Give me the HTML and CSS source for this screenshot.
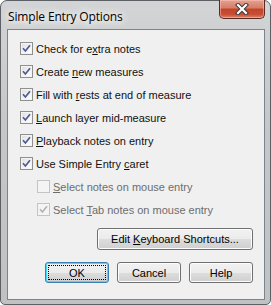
FILE: index.html
```html
<!DOCTYPE html>
<html>
<head>
<meta charset="utf-8">
<link rel="stylesheet" href="styles.css">
</head>
<body>
<div class="window">
  <div class="titlebar">
    <span class="title">Simple Entry Options</span>
    <div class="close">
      <svg width="14" height="12" viewBox="0 0 14 12">
        <path d="M3 2 L11 10 M11 2 L3 10" stroke="#3a3a3a" stroke-width="4.2" stroke-linecap="square" fill="none"/>
        <path d="M3 2 L11 10 M11 2 L3 10" stroke="#ffffff" stroke-width="2.2" stroke-linecap="square" fill="none"/>
      </svg>
    </div>
  </div>
  <div class="client">
    <div class="options">
      <div class="row"><span class="cb"><svg class="tick" width="9" height="9" viewBox="0 0 9 9"><path d="M1 4.2 L3.4 7 L8 1.2" stroke="#4a5a96" stroke-width="1.7" fill="none"/></svg></span><span class="lbl">Check for e<u>x</u>tra notes</span></div>
      <div class="row"><span class="cb"><svg class="tick" width="9" height="9" viewBox="0 0 9 9"><path d="M1 4.2 L3.4 7 L8 1.2" stroke="#4a5a96" stroke-width="1.7" fill="none"/></svg></span><span class="lbl">Create <u>n</u>ew measures</span></div>
      <div class="row"><span class="cb"><svg class="tick" width="9" height="9" viewBox="0 0 9 9"><path d="M1 4.2 L3.4 7 L8 1.2" stroke="#4a5a96" stroke-width="1.7" fill="none"/></svg></span><span class="lbl">Fill with <u>r</u>ests at end of measure</span></div>
      <div class="row"><span class="cb"><svg class="tick" width="9" height="9" viewBox="0 0 9 9"><path d="M1 4.2 L3.4 7 L8 1.2" stroke="#4a5a96" stroke-width="1.7" fill="none"/></svg></span><span class="lbl"><u>L</u>aunch layer mid-measure</span></div>
      <div class="row"><span class="cb"><svg class="tick" width="9" height="9" viewBox="0 0 9 9"><path d="M1 4.2 L3.4 7 L8 1.2" stroke="#4a5a96" stroke-width="1.7" fill="none"/></svg></span><span class="lbl"><u>P</u>layback notes on entry</span></div>
      <div class="row"><span class="cb"><svg class="tick" width="9" height="9" viewBox="0 0 9 9"><path d="M1 4.2 L3.4 7 L8 1.2" stroke="#4a5a96" stroke-width="1.7" fill="none"/></svg></span><span class="lbl">Use Simple Entry <u>c</u>aret</span></div>
      <div class="row sub disabled"><span class="cb"></span><span class="lbl"><u>S</u>elect notes on mouse entry</span></div>
      <div class="row sub disabled"><span class="cb"><svg class="tick" width="9" height="9" viewBox="0 0 9 9"><path d="M1 4.2 L3.4 7 L8 1.2" stroke="#b4b4b4" stroke-width="1.7" fill="none"/></svg></span><span class="lbl">Select <u>T</u>ab notes on mouse entry</span></div>
    </div>
    <div class="edit-row">
      <button class="btn edit"><span>Edit <u>K</u>eyboard Shortcuts...</span></button>
    </div>
    <div class="actions">
      <button class="btn default"><span class="focus">OK</span></button>
      <button class="btn">Cancel</button>
      <button class="btn">Help</button>
    </div>
  </div>
</div>
</body>
</html>
```

FILE: styles.css
```css
html, body {
  margin: 0;
  padding: 0;
  background: #ffffff;
}

.window {
  width: 271px;
  height: 305px;
  box-sizing: border-box;
  border: 1px solid #5c5f63;
  border-radius: 7px 7px 5px 5px;
  background: linear-gradient(180deg, #d3d4d5 0%, #c6c7c8 40%, #c0c1c2 100%);
  padding: 0 5px 4px 6px;
  display: flex;
  flex-direction: column;
  font-family: "Liberation Sans", Arial, sans-serif;
  font-size: 11px;
  color: #000;
}

.titlebar {
  height: 28px;
  display: flex;
  justify-content: space-between;
  align-items: flex-start;
}

.title {
  font-family: "Open Sans", "Noto Sans", sans-serif;
  font-size: 12px;
  letter-spacing: -0.15px;
  margin-top: 7px;
  margin-left: 1px;
  color: #000;
  text-shadow: 0 0 6px #fff, 0 0 10px #fff, 0 0 12px #fff;
}

.close {
  width: 46px;
  height: 19px;
  margin-top: -1px;
  box-sizing: border-box;
  border: 1px solid #5a2a22;
  border-top: none;
  border-radius: 0 0 5px 5px;
  background: linear-gradient(180deg, #e3a290 0%, #d67c66 45%, #c2432a 50%, #c84e35 80%, #d98670 100%);
  box-shadow: inset 0 0 0 1px rgba(255, 200, 190, 0.5);
  display: flex;
  align-items: center;
  justify-content: center;
}

.client {
  flex: 1;
  box-sizing: border-box;
  border: 1px solid #7b848d;
  background: #f0f0f0;
  display: flex;
  flex-direction: column;
  padding: 7px 11px 0 12px;
}

.options {
  display: flex;
  flex-direction: column;
}

.row {
  height: 23px;
  display: flex;
  align-items: center;
}

.row.sub {
  padding-left: 17px;
}

.cb {
  width: 13px;
  height: 13px;
  box-sizing: border-box;
  border: 1px solid #8f8f8f;
  background: linear-gradient(135deg, #dcdcdc 0%, #f5f5f5 60%, #ffffff 100%);
  box-shadow: inset 0 0 0 1px #f4f4f4;
  display: flex;
  align-items: center;
  justify-content: center;
  margin-right: 3px;
  flex: none;
}

.disabled .cb {
  border-color: #c4c4c4;
  background: #f4f4f4;
  box-shadow: none;
}

.lbl {
  color: #111;
}

.disabled .lbl {
  color: #6d6d6d;
}

.lbl u {
  text-decoration-thickness: 1px;
  text-underline-offset: 1px;
}

.edit-row {
  margin-top: 7px;
  display: flex;
  justify-content: flex-end;
}

.btn {
  font-family: "Liberation Sans", Arial, sans-serif;
  font-size: 11px;
  color: #000;
  height: 22px;
  box-sizing: border-box;
  border: 1px solid #707070;
  border-radius: 3px;
  background: linear-gradient(180deg, #f2f2f2 0%, #ebebeb 50%, #dddddd 51%, #cfcfcf 100%);
  box-shadow: inset 0 0 0 1px #fcfcfc;
  padding: 0;
  display: flex;
  align-items: center;
  justify-content: center;
}

.btn.edit {
  width: 156px;
}

.actions {
  margin-top: 12px;
  display: flex;
  justify-content: flex-end;
  gap: 8px;
}

.actions .btn {
  width: 64px;
  height: 21px;
}

.btn.default {
  border-color: #3c7fb1;
  box-shadow: inset 0 0 0 1px #48d8fb;
  position: relative;
}

.btn.default .focus {
  position: absolute;
  left: 2px;
  top: 2px;
  right: 2px;
  bottom: 2px;
  border: 1px dotted #000;
  display: flex;
  align-items: center;
  justify-content: center;
}
```
